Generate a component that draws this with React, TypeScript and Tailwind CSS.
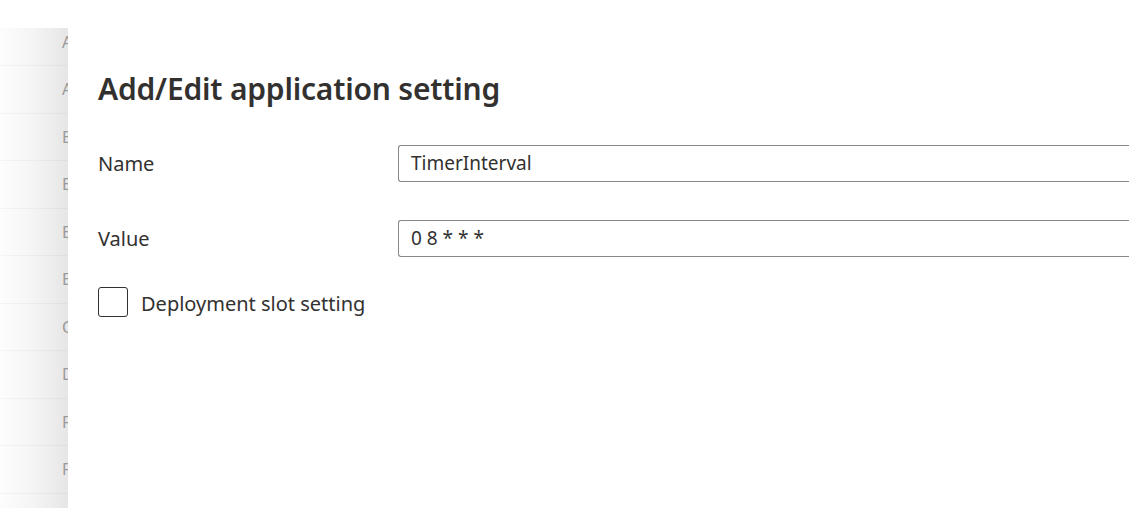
import React from 'react';

const rows = ['A', 'A', 'E', 'E', 'E', 'E', 'C', 'D', 'F', 'F'];

const Field: React.FC<{ label: string; value: string }> = ({ label, value }) => (
  <div className="flex items-center">
    <div className="w-[300px] text-[20px] text-[#323130]">{label}</div>
    <div className="flex-1 h-[37px] border border-[#8a8886] rounded-[3px] border-r-0 rounded-r-none flex items-center px-[12px] text-[19px] text-[#323130]">
      {value}
    </div>
  </div>
);

const App: React.FC = () => {
  return (
    <div className="flex w-[1129px] h-[508px] overflow-hidden bg-white" style={{ fontFamily: '"Noto Sans", "Open Sans", sans-serif' }}>
      {/* background blade, mostly covered */}
      <div className="w-[68px] shrink-0 pt-[28px] overflow-hidden">
        <div className="h-full bg-gradient-to-r from-[#fdfdfd] via-[#f4f4f4] to-[#e6e6e6]">
          {rows.map((r, i) => (
            <div
              key={i}
              className={`${i === 0 ? 'h-[38px] pb-[9px]' : 'h-[47.5px]'} flex items-center pl-[62px] border-b border-black/[0.03] text-[16px] text-[#9a9a9a] whitespace-nowrap`}
            >
              {r}
            </div>
          ))}
        </div>
      </div>

      {/* panel */}
      <div className="flex-1 pl-[30px] pt-[69px]">
        <h2 className="text-[30px] font-semibold leading-[40px] text-[#323130] tracking-[-0.2px]">Add/Edit application setting</h2>
        <div className="mt-[36px] flex flex-col gap-[38px]">
          <Field label="Name" value="TimerInterval" />
          <Field label="Value" value="0 8 * * *" />
        </div>
        <div className="mt-[30px] flex items-center gap-[13px]">
          <div className="w-[30px] h-[30px] border border-[#323130] rounded-[3px]" />
          <span className="text-[20px] text-[#323130] translate-y-[2px]">Deployment slot setting</span>
        </div>
      </div>
    </div>
  );
};

export default App;
